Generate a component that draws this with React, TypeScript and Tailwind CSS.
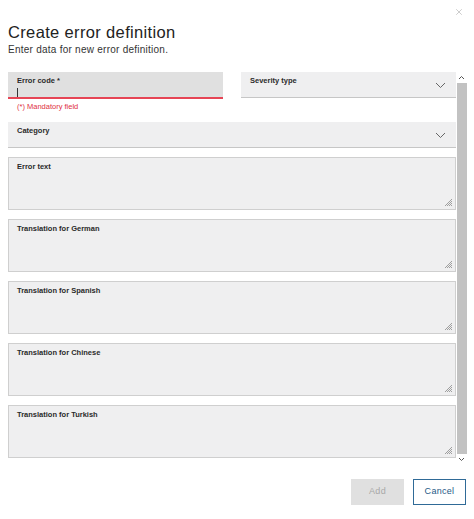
import { X } from "lucide-react"

const textareas = [
  "Error text",
  "Translation for German",
  "Translation for Spanish",
  "Translation for Chinese",
  "Translation for Turkish",
]

function Grip() {
  return (
    <svg width="9" height="9" viewBox="0 0 9 9" className="absolute right-[2px] bottom-[2px]">
      <path d="M8 1L1 8M8 3L3 8M8 5L5 8M8 7L7 8" stroke="#8a8a8a" strokeWidth="0.8" />
    </svg>
  )
}

function Chevron() {
  return (
    <svg width="11" height="7" viewBox="0 0 11 7" className="absolute right-[10px] top-[10px]">
      <path d="M1 1L5.5 5.5L10 1" stroke="#666" strokeWidth="1" fill="none" />
    </svg>
  )
}

function SelectField({ label }: { label: string }) {
  return (
    <div className="relative h-[26px] bg-[#efeff0] border-b border-b-[#c6c6c6] pl-[9px] pt-[5px]">
      <span className="block text-[7.5px] font-bold leading-none text-[#2a2a2a]">{label}</span>
      <Chevron />
    </div>
  )
}

function TextArea({ label }: { label: string }) {
  return (
    <div className="relative h-[53px] bg-[#efeff0] border border-[#cfcfcf] pl-[8px] pt-[5px]">
      <span className="block text-[7.5px] font-bold leading-none text-[#2a2a2a]">{label}</span>
      <Grip />
    </div>
  )
}

export default function App() {
  return (
    <div
      className="w-[474px] h-[519px] bg-white relative overflow-hidden text-[#222]"
      style={{ fontFamily: '"Liberation Sans", Arial, sans-serif' }}
    >
      <button className="absolute right-[10px] top-[7px] text-[#9a9a9a]">
        <X className="w-[10px] h-[10px]" strokeWidth={1.2} />
      </button>

      <div className="pl-[8px] pt-[22px]">
        <h1 className="text-[16.5px] leading-[20px] tracking-[0.35px] text-[#222]">Create error definition</h1>
        <p className="text-[10px] leading-[12px] mt-[2px] tracking-[0.25px] text-[#333]">Enter data for new error definition.</p>
      </div>

      <div className="flex mt-[16px] ml-[8px] w-[459px] h-[393px]">
        <div className="flex-1 flex flex-col">
          <div className="grid grid-cols-2 gap-x-[18px]">
            <div>
              <div className="h-[25px] bg-[#e0e0e0] pl-[9px] pt-[5px]">
                <span className="block text-[7.5px] font-bold leading-none text-[#2a2a2a]">Error code *</span>
                <div className="w-px h-[10px] bg-[#333] mt-[3px]" />
              </div>
              <div className="h-[1.5px] bg-[#e64555]" />
              <p className="text-[7.5px] leading-[16px] pl-[9px] text-[#e0303f]">(*) Mandatory field</p>
            </div>
            <SelectField label="Severity type" />
          </div>
          <div className="mt-[7.5px]">
            <SelectField label="Category" />
          </div>
          <div className="flex flex-col gap-[9px] mt-[9px]">
            {textareas.map((t) => (
              <TextArea key={t} label={t} />
            ))}
          </div>
        </div>

        <div className="w-[11px] flex flex-col items-center">
          <svg width="7" height="5" viewBox="0 0 7 5" className="mt-[3px]">
            <path d="M1 4L3.5 1.5L6 4" stroke="#555" strokeWidth="1" fill="none" />
          </svg>
          <div className="w-[10px] flex-1 bg-[#c2c2c2] mt-[3px] mb-[3px]" />
          <svg width="7" height="5" viewBox="0 0 7 5" className="mb-[3px]">
            <path d="M1 1L3.5 3.5L6 1" stroke="#555" strokeWidth="1" fill="none" />
          </svg>
        </div>
      </div>

      <div className="flex justify-end gap-[9px] pr-[8px] mt-[14px]">
        <button className="w-[53px] h-[26px] bg-[#e0e0e0] text-[9px] text-[#a8a8a8] tracking-[0.3px]">Add</button>
        <button className="w-[53px] h-[26px] border border-[#2f6a97] text-[9px] text-[#1e5a87] tracking-[0.3px]">Cancel</button>
      </div>
    </div>
  )
}
